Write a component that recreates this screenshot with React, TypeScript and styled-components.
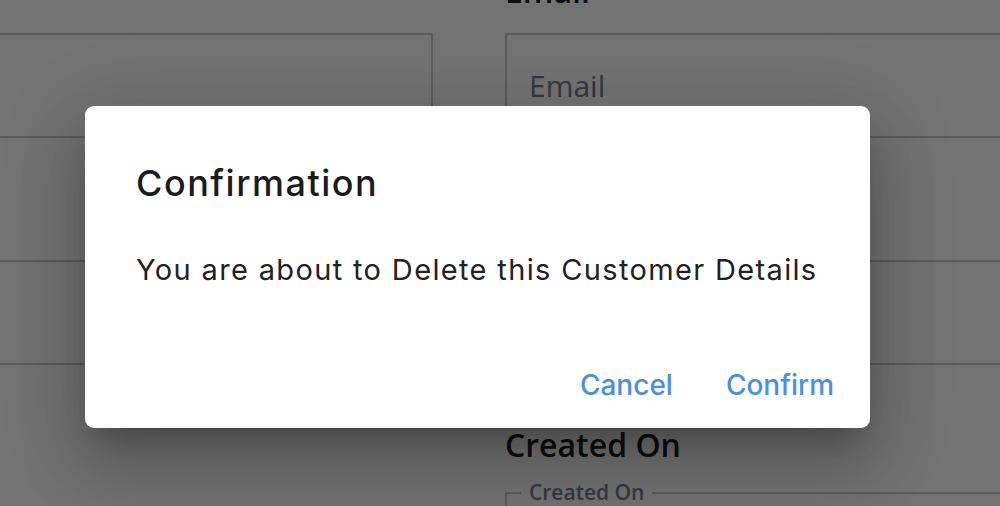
import React from 'react';
import styled, { createGlobalStyle } from 'styled-components';

const GlobalStyle = createGlobalStyle`
  html, body {
    margin: 0;
    padding: 0;
    height: 100%;
    overflow: hidden;
    background: #fff;
  }
  #root {
    height: 100%;
  }
  * {
    box-sizing: border-box;
  }
`;

const Page = styled.div`
  position: relative;
  width: 1000px;
  height: 506px;
  overflow: hidden;
  font-family: 'Open Sans', 'Noto Sans', sans-serif;
`;

const Form = styled.div`
  display: grid;
  grid-template-columns: 633px 560px;
  column-gap: 72px;
  margin-left: -200px;
  margin-top: -29px;
`;

const Column = styled.div`
  display: flex;
  flex-direction: column;
  gap: 60px;
`;

const Group = styled.div`
  display: flex;
  flex-direction: column;
`;

const Heading = styled.h3<{ $gap?: number }>`
  margin: 0 0 ${(p) => p.$gap ?? 22}px;
  height: 40px;
  font-size: 32px;
  font-weight: 600;
  line-height: 40px;
  color: #1e1e1e;
`;

const InputBox = styled.div`
  height: 105px;
  border: 2px solid #c6c9cf;
  display: flex;
  align-items: center;
  padding: 0 22px;
  font-size: 30px;
  color: #76808f;
`;

const Fieldset = styled.fieldset`
  margin: 0;
  height: 105px;
  border: 2px solid #c6c9cf;
  padding: 0 14px;
`;

const Legend = styled.legend`
  padding: 0 8px;
  font-size: 21px;
  font-weight: 600;
  line-height: 27px;
  color: #76808f;
`;

const Overlay = styled.div`
  position: absolute;
  inset: 0;
  background: rgba(0, 0, 0, 0.55);
  display: flex;
  align-items: flex-start;
  padding: 106px 0 0 85px;
`;

const Dialog = styled.div`
  width: 785px;
  height: 322px;
  background: #fff;
  border-radius: 9px;
  display: flex;
  flex-direction: column;
  padding: 55px 36px 25px 51px;
  font-family: Inter, 'Liberation Sans', sans-serif;
  box-shadow: 0 19px 26px -12px rgba(0, 0, 0, 0.25),
    0 42px 66px 5px rgba(0, 0, 0, 0.14), 0 16px 80px 14px rgba(0, 0, 0, 0.12);
`;

const Title = styled.h2`
  margin: 0;
  font-size: 36px;
  font-weight: 500;
  line-height: 44px;
  letter-spacing: 1.5px;
  color: #1b1b1b;
`;

const Message = styled.p`
  margin: 47px 0 0;
  font-size: 29px;
  font-weight: 400;
  line-height: 36px;
  letter-spacing: 1.35px;
  color: #222;
`;

const Actions = styled.div`
  margin-top: auto;
  display: flex;
  justify-content: flex-end;
  gap: 53px;
`;

const TextButton = styled.button`
  border: none;
  background: none;
  padding: 0;
  font-family: inherit;
  font-size: 28px;
  font-weight: 500;
  line-height: 36px;
  color: #4a90e2;
  cursor: pointer;
`;

const App: React.FC = () => {
  return (
    <>
      <GlobalStyle />
      <Page>
        <Form>
          <Column>
            <Group>
              <Heading />
              <InputBox />
            </Group>
            <Group>
              <Heading />
              <InputBox />
            </Group>
          </Column>
          <Column>
            <Group>
              <Heading>Email</Heading>
              <InputBox>Email</InputBox>
            </Group>
            <Group>
              <Heading />
              <InputBox />
            </Group>
            <Group>
              <Heading $gap={14}>Created On</Heading>
              <Fieldset>
                <Legend>Created On</Legend>
              </Fieldset>
            </Group>
          </Column>
        </Form>
        <Overlay>
          <Dialog role="dialog">
            <Title>Confirmation</Title>
            <Message>You are about to Delete this Customer Details</Message>
            <Actions>
              <TextButton>Cancel</TextButton>
              <TextButton>Confirm</TextButton>
            </Actions>
          </Dialog>
        </Overlay>
      </Page>
    </>
  );
};

export default App;
